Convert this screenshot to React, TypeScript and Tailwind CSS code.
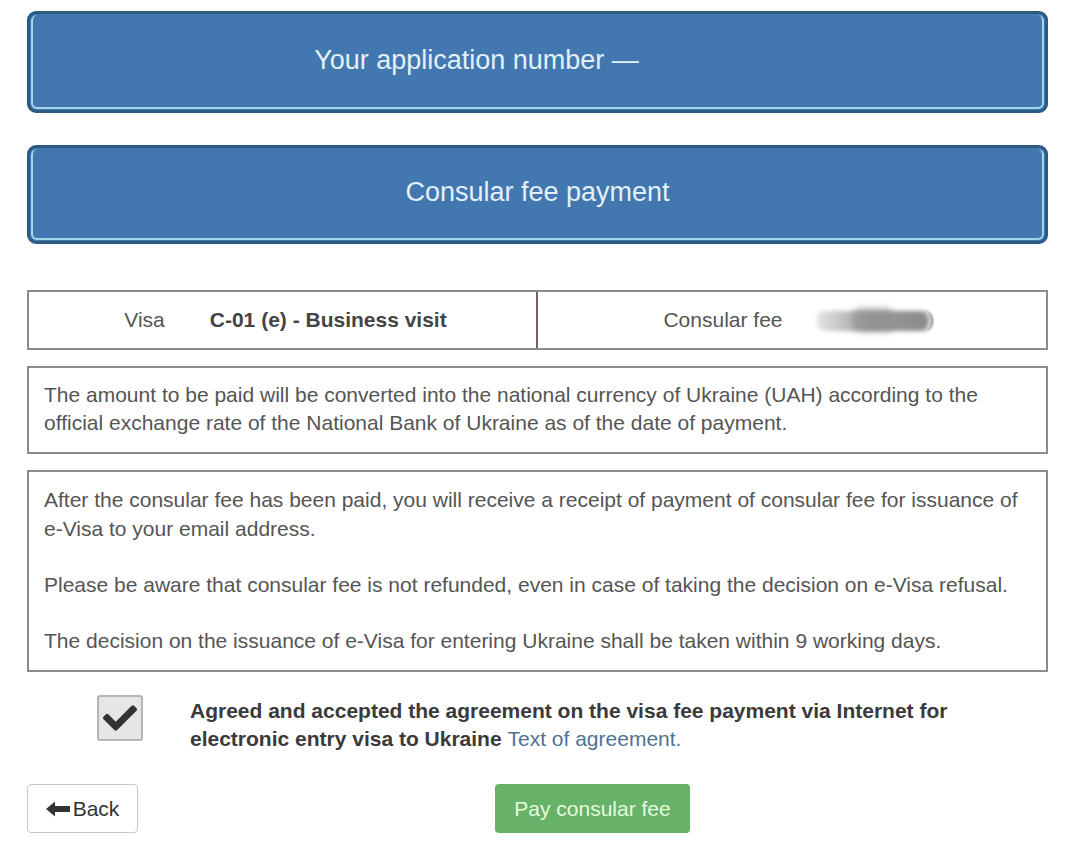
import React from "react";
import { FaCheck } from "react-icons/fa";

function BluePanel({ children, h }: { children: React.ReactNode; h: string }) {
  return (
    <div className={`rounded-[9px] border-[3px] border-[#2c5a80] bg-[#4377b0] p-[1px] ${h}`}>
      <div className="flex h-full items-center justify-center rounded-[6px] border-l-2 border-b-2 border-r-2 border-[#a3d6ec] border-t-0">
        {children}
      </div>
    </div>
  );
}

export default function App() {
  return (
    <div
      className="min-h-[866px] w-[1080px] bg-white text-[#555]"
      style={{ fontFamily: '"Liberation Sans", Arial, sans-serif' }}
    >
      <div className="flex flex-col px-[27px] pt-[11px]" style={{ width: 1075 }}>
        <BluePanel h="h-[102px]">
          <div className="-ml-[122px] -mt-[2px] text-[27px] text-[#e2f0f8]">Your application number —</div>
        </BluePanel>
        <div className="mt-[32px]">
          <BluePanel h="h-[99px]">
            <div className="-mt-[2px] text-[27px] text-[#e2f0f8]">Consular fee payment</div>
          </BluePanel>
        </div>

        <div className="mt-[46px] flex h-[60px] border-2 border-[#8c8c8c]">
          <div className="flex w-[509px] items-center justify-center gap-[45px] border-r-2 border-[#7a5c5c] pl-[6px] text-[21px]">
            <span className="text-[#555]">Visa</span>
            <span className="font-bold text-[#444]">C-01 (e) - Business visit</span>
          </div>
          <div className="flex flex-1 items-center justify-center gap-[30px] pl-[14px] text-[21px]">
            <span className="text-[#555]">Consular fee</span>
            <span className="relative inline-block h-[30px] w-[122px]">
              <span className="absolute left-[4px] top-[6px] h-[20px] w-[112px] rounded-[8px] bg-gradient-to-r from-[#e4e4e4] via-[#9a9a9a] to-[#8a8a8a] blur-[2px]" />
              <span className="absolute left-[40px] top-[3px] h-[24px] w-[40px] rounded-[6px] bg-[#8f8f8f] opacity-60 blur-[3px]" />
              <span className="absolute right-[2px] top-[5px] h-[22px] w-[10px] rounded-r-full border-r-2 border-[#777] blur-[1px]" />
            </span>
          </div>
        </div>

        <div className="mt-[16px] border-2 border-[#8c8c8c] px-[15px] pb-[15px] pt-[13px] text-[21px] leading-[28px]">
          <p>
            The amount to be paid will be converted into the national currency of Ukraine (UAH) according to the
            <br />
            official exchange rate of the National Bank of Ukraine as of the date of payment.
          </p>
        </div>

        <div className="mt-[16px] border-2 border-[#8c8c8c] px-[15px] pb-[15px] pt-[13px] text-[21px] leading-[29px]">
          <p>
            After the consular fee has been paid, you will receive a receipt of payment of consular fee for issuance of
            <br />
            e-Visa to your email address.
          </p>
          <p className="mt-[27px]">
            Please be aware that consular fee is not refunded, even in case of taking the decision on e-Visa refusal.
          </p>
          <p className="mt-[27px]">
            The decision on the issuance of e-Visa for entering Ukraine shall be taken within 9 working days.
          </p>
        </div>

        <div className="mt-[23px] flex items-start">
          <div className="ml-[70px] flex h-[46px] w-[46px] items-center justify-center rounded-[3px] border-2 border-[#b5b5b5] bg-[#e6e6e6]">
            <FaCheck className="text-[#333]" size={34} />
          </div>
          <div className="ml-[47px] mt-[2px] text-[21px] leading-[28px] font-bold text-[#3a3a3a]">
            Agreed and accepted the agreement on the visa fee payment via Internet for
            <br />
            electronic entry visa to Ukraine{" "}
            <span className="font-normal text-[#4f7390]">Text of agreement.</span>
          </div>
        </div>

        <div className="mt-[31px] flex items-center">
          <button className="flex h-[49px] w-[111px] items-center justify-center gap-[3px] rounded-[4px] border border-[#c8c8c8] bg-white text-[21px] text-[#333]">
            <svg width="24" height="16" viewBox="0 0 24 16" className="mt-[1px]">
              <path d="M0 8 L9 0.5 L9 5 L24 5 L24 11 L9 11 L9 15.5 Z" fill="#333" />
            </svg>
            <span>Back</span>
          </button>
          <button className="ml-[357px] flex h-[49px] w-[195px] items-center justify-center rounded-[4px] bg-[#68b168] text-[21px] text-[#e6fbdc]">
            Pay consular fee
          </button>
        </div>
      </div>
    </div>
  );
}
